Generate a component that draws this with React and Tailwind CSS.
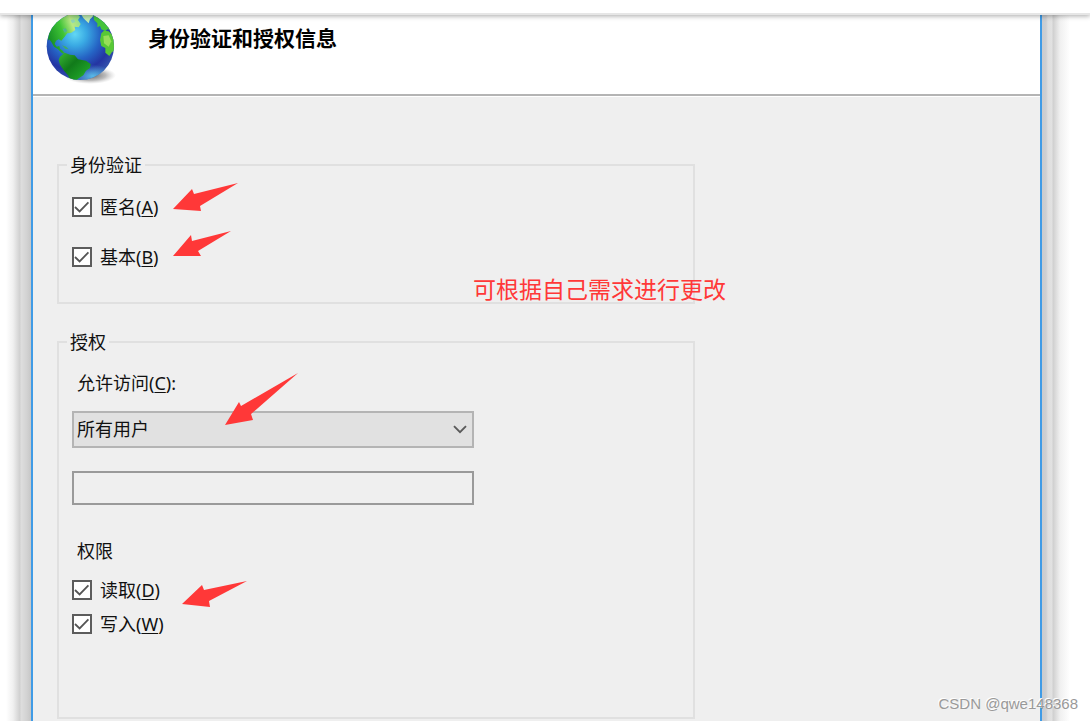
import React, { useState } from "react";

const Globe = () => (
  <svg width="80" height="72" viewBox="6 21 240 216" className="shrink-0" aria-hidden="true">
    <defs>
      <radialGradient id="ocean" cx="0.42" cy="0.32" r="0.68">
        <stop offset="0" stopColor="#62d8f4" />
        <stop offset="0.25" stopColor="#3aaae4" />
        <stop offset="0.55" stopColor="#2563c4" />
        <stop offset="0.8" stopColor="#2434a2" />
        <stop offset="1" stopColor="#3353ac" />
      </radialGradient>
      <radialGradient id="glow" cx="0.5" cy="0.5" r="0.5">
        <stop offset="0" stopColor="#63d3f5" stopOpacity="0.8" />
        <stop offset="1" stopColor="#63d3f5" stopOpacity="0" />
      </radialGradient>
      <radialGradient id="ground" cx="0.5" cy="0.5" r="0.5">
        <stop offset="0" stopColor="#222" stopOpacity="0.75" />
        <stop offset="0.6" stopColor="#555" stopOpacity="0.4" />
        <stop offset="1" stopColor="#999" stopOpacity="0" />
      </radialGradient>
      <linearGradient id="north" x1="0" y1="0.7" x2="1" y2="0.2">
        <stop offset="0" stopColor="#128a22" />
        <stop offset="0.45" stopColor="#3fc436" />
        <stop offset="0.75" stopColor="#b9e884" />
        <stop offset="1" stopColor="#8edc8a" />
      </linearGradient>
      <linearGradient id="south" x1="0" y1="0" x2="1" y2="1">
        <stop offset="0" stopColor="#3bb636" />
        <stop offset="0.4" stopColor="#117a1a" />
        <stop offset="0.7" stopColor="#1c9a25" />
        <stop offset="1" stopColor="#3bd540" />
      </linearGradient>
      <clipPath id="ball">
        <circle cx="121" cy="115" r="101" />
      </clipPath>
    </defs>
    <ellipse cx="150" cy="202" rx="78" ry="26" fill="url(#ground)" />
    <circle cx="121" cy="115" r="101" fill="url(#ocean)" />
    <g clipPath="url(#ball)">
      <ellipse cx="158" cy="204" rx="62" ry="34" fill="url(#glow)" />
      <path d="M24 98 L26 72 L42 42 L62 20 L84 10 L108 14 L120 26 L114 36 L122 48 L116 58 L104 56 L106 66 L94 74 L82 76 L74 86 L64 98 L56 94 L48 98 L44 108 L50 116 L58 114 L60 122 L68 128 L76 138 L66 136 L54 124 L42 116 L34 102 L28 94 Z" fill="url(#north)" />
      <path d="M68 64 L76 60 L82 68 L74 74 Z" fill="#4fb58e" />
      <path d="M92 36 L102 34 L106 42 L96 46 Z" fill="#8fd6b4" />
      <path d="M120 14 L162 14 L158 26 L150 34 L146 46 L138 38 L130 30 Z" fill="#bfeab0" />
      <path d="M66 112 L78 116 L86 124 L76 122 Z" fill="#3fae62" />
      <path d="M60 146 L74 134 L90 140 L104 142 L114 154 L138 158 L152 168 L150 180 L138 188 L130 202 L114 212 L104 226 L92 218 L84 202 L72 188 L60 170 L56 156 Z" fill="url(#south)" />
      <path d="M160 22 L176 28 L192 42 L206 56 L212 66 L202 64 L196 70 L184 64 L180 54 L172 58 L172 46 L162 36 Z" fill="#45c33c" />
      <path d="M184 76 L192 68 L206 70 L218 82 L232 96 L228 124 L216 132 L208 144 L196 134 L196 120 L184 114 L180 96 Z" fill="#58c836" />
      <path d="M190 84 L206 82 L214 100 L206 116 L192 106 Z" fill="#aee766" opacity="0.75" />
    </g>
  </svg>
);

const Arrow = ({ points, width, height, className }) => (
  <svg
    width={width}
    height={height}
    viewBox={`0 0 ${width} ${height}`}
    className={`pointer-events-none absolute ${className}`}
    aria-hidden="true"
  >
    <polygon points={points} fill="#ff3838" />
  </svg>
);

const CheckRow = ({ id, text, accessKey }) => {
  const [checked, setChecked] = useState(true);

  return (
    <label htmlFor={id} className="flex h-6 w-fit items-center gap-2">
      <span className="grid h-5 w-5 place-items-center">
        <input
          id={id}
          type="checkbox"
          accessKey={accessKey}
          checked={checked}
          onChange={(e) => setChecked(e.target.checked)}
          className="peer col-start-1 row-start-1 h-5 w-5 appearance-none border-2 border-[#5c5c5c] bg-white"
        />
        <svg
          width="16"
          height="16"
          viewBox="0 0 16 16"
          className="pointer-events-none invisible col-start-1 row-start-1 peer-checked:visible"
          aria-hidden="true"
        >
          <path d="M1 8 L5.6 12.4 L14.4 3.4" fill="none" stroke="#555" strokeWidth="1.8" />
        </svg>
      </span>
      <span>
        {text}(<u className="underline-offset-2">{accessKey}</u>)
      </span>
    </label>
  );
};

const Group = ({ title, children, className }) => (
  <fieldset className={`w-full max-w-[638px] border-2 border-[#e0e0e0] px-2 ${className}`}>
    <legend className="px-[3px]">{title}</legend>
    <div className="relative pl-[5px]">{children}</div>
  </fieldset>
);

const App = () => {
  const [scope, setScope] = useState("all");

  return (
    <div className="relative flex min-h-screen flex-col bg-white font-['Noto_Sans','Noto_Sans_CJK_SC',sans-serif] text-[18px] leading-6 text-[#111]">
      <div className="relative z-10 h-[15px] border-b-2 border-[#e6e6e6] bg-white shadow-[0_1px_5px_rgba(0,0,0,0.35)]" />

      <div className="flex flex-1">
        {/* window shadow, left */}
        <div className="w-[31px] shrink-0 bg-[linear-gradient(to_right,#fff_6px,#f0f0f0_13px,#cfcfcf_20px,#dedede_21px,#d2d2d2_27px,#c6c6c6_31px)]" />

        <div className="flex min-w-0 flex-1 flex-col border-x-2 border-[#3f9be6] bg-[#efefef]">
          <header className="flex h-[81px] items-start gap-[26px] border-b-2 border-[#b4b4b4] bg-white pl-[9px]">
            <Globe />
            <h1 className="pt-[9px] text-[21px] leading-7 font-bold text-black">身份验证和授权信息</h1>
          </header>

          <main className="flex flex-col gap-[26px] border-t border-white px-6 pt-14">
            <Group title="身份验证" className="pb-[33px]">
              <div className="flex flex-col gap-[26px] pt-[18px]">
                <CheckRow id="anonymous" text="匿名" accessKey="A" />
                <CheckRow id="basic" text="基本" accessKey="B" />
              </div>
              <Arrow
                width={68}
                height={30}
                className="top-[5px] left-[105px]"
                points="1,27 20,7 22,12 66,1 28,24 29,29"
              />
              <Arrow
                width={60}
                height={28}
                className="top-[53px] left-[105px]"
                points="1,26 19,5 20,11 59,1 26,21 29,26"
              />
              <p className="absolute top-24 left-[406px] text-[23px] leading-8 whitespace-nowrap text-[#ff3838]">
                可根据自己需求进行更改
              </p>
            </Group>

            <Group title="授权" className="pb-[81px]">
              <div className="flex flex-col pt-[17px]">
                <label htmlFor="scope" className="w-fit pl-[5px]">
                  允许访问(<u className="underline-offset-2">C</u>):
                </label>
                <div className="mt-4 grid w-full max-w-[402px] items-center">
                  <select
                    id="scope"
                    value={scope}
                    onChange={(e) => setScope(e.target.value)}
                    className="col-start-1 row-start-1 h-[37px] appearance-none border-2 border-[#b4b4b4] bg-[#e1e1e1] pb-0.5 pl-[3px]"
                  >
                    <option value="all">所有用户</option>
                    <option value="anonymous">匿名用户</option>
                    <option value="roles">指定的角色或用户组</option>
                    <option value="users">指定的用户</option>
                  </select>
                  <svg
                    width="14"
                    height="9"
                    viewBox="0 0 14 9"
                    className="pointer-events-none col-start-1 row-start-1 mr-[7px] justify-self-end"
                    aria-hidden="true"
                  >
                    <path d="M1 1.2 L7 7.2 L13 1.2" fill="none" stroke="#5a5a5a" strokeWidth="1.9" />
                  </svg>
                </div>
                <input
                  type="text"
                  aria-label="指定的角色或用户"
                  className="mt-[23px] h-[34px] w-full max-w-[402px] border-2 border-[#9a9a9a] bg-[#efefef] px-1"
                />
                <p className="mt-[34px] pl-[5px]">权限</p>
                <div className="mt-[15px] flex flex-col gap-2.5">
                  <CheckRow id="read" text="读取" accessKey="D" />
                  <CheckRow id="write" text="写入" accessKey="W" />
                </div>
              </div>
              <Arrow
                width={74}
                height={54}
                className="top-[19px] left-[158px]"
                points="0,52 14,29 16,33 73,0 26,41 28,47"
              />
              <Arrow
                width={66}
                height={27}
                className="top-[227px] left-[115px]"
                points="0,23 20,4 22,9 65,0 27,20 28,26"
              />
            </Group>
          </main>
        </div>

        {/* window shadow, right */}
        <div className="w-12 shrink-0 bg-[linear-gradient(to_right,#c9cbcf_0px,#cdcfd2_4px,#dedede_6px,#e2e2e2_10px,#cfcfcf_11px,#f0f0f0_18px,#fff_28px)]" />
      </div>

      <div className="absolute right-3 bottom-2 font-['Liberation_Sans',sans-serif] text-[15px] leading-[18px] text-[#999] [text-shadow:-1px_-1px_0_#fff]">
        CSDN @qwe148368
      </div>
    </div>
  );
};

export default App;
